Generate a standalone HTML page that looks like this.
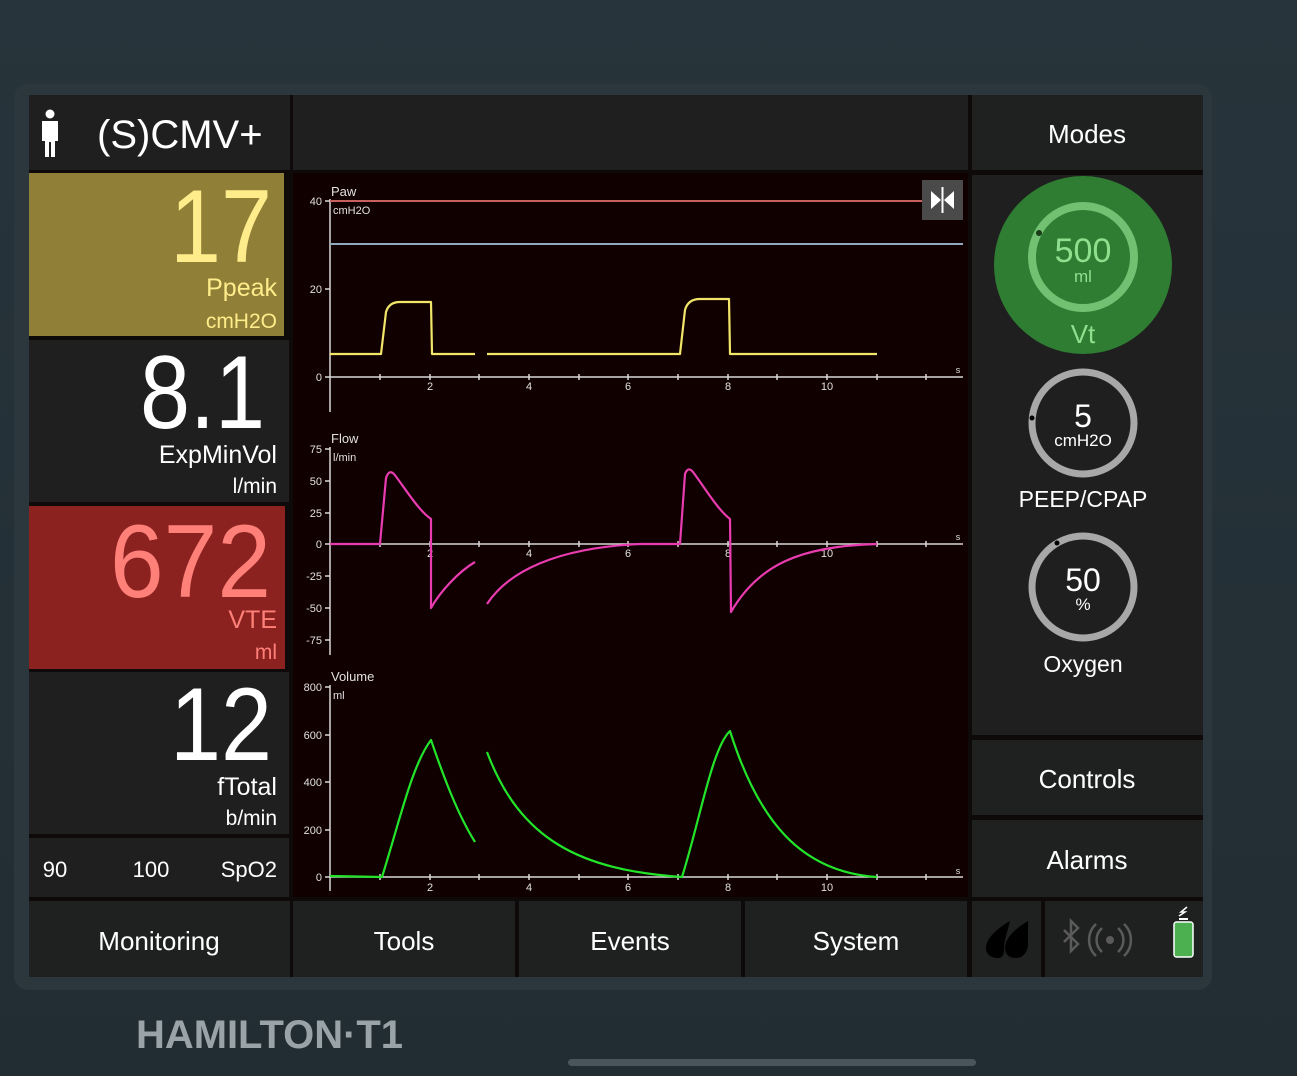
<!DOCTYPE html>
<html><head><meta charset="utf-8">
<style>
html,body{margin:0;padding:0;width:1297px;height:1076px;overflow:hidden;background:#263238;}
svg{display:block}
text{font-family:"Liberation Sans",sans-serif;}
.n{font-family:"Liberation Sans Narrow","Liberation Sans",sans-serif;}
</style></head><body>
<svg width="1297" height="1076" viewBox="0 0 1297 1076" xmlns="http://www.w3.org/2000/svg">
<defs>
<linearGradient id="bg" x1="0" y1="0" x2="0" y2="1">
<stop offset="0" stop-color="#27343b"/><stop offset="1" stop-color="#222d33"/></linearGradient>
</defs>
<rect width="1297" height="1076" fill="url(#bg)"/>
<rect x="14" y="84" width="1198" height="906" rx="14" fill="#2b363d"/>
<rect x="29" y="95" width="1174" height="882" fill="#0e0a0a"/>
<!-- header -->
<rect x="29" y="95" width="261" height="75" fill="#1f1f1f"/>
<rect x="293" y="95" width="675" height="75" fill="#1f1f1f"/>
<rect x="972" y="95" width="231" height="75" fill="#1f2120"/>
<g fill="#fff">
<circle cx="50" cy="114" r="4.5"/>
<path d="M42 121h16v20h-3v16h-4v-15h-2v15h-4v-16h-3z"/>
</g>
<text x="97" y="148" font-size="40" fill="#fff">(S)CMV+</text>
<text x="1087" y="143" font-size="26" fill="#fff" text-anchor="middle">Modes</text>
<!-- left tiles -->
<rect x="29" y="173" width="255" height="163" fill="#8f7f37"/>
<text class="n" x="170" y="262" font-size="104" fill="#ffec8a" textLength="102" lengthAdjust="spacingAndGlyphs">17</text>
<text x="277" y="296" font-size="25" fill="#ffec8a" text-anchor="end">Ppeak</text>
<text x="277" y="328" font-size="21" fill="#ffec8a" text-anchor="end">cmH2O</text>
<rect x="29" y="340" width="260" height="162" fill="#1f1f1f"/>
<text class="n" x="140" y="428" font-size="104" fill="#fff" textLength="125" lengthAdjust="spacingAndGlyphs">8.1</text>
<text x="277" y="463" font-size="25" fill="#fff" text-anchor="end">ExpMinVol</text>
<text x="277" y="493" font-size="21" fill="#fff" text-anchor="end">l/min</text>
<rect x="29" y="506" width="256" height="163" fill="#8b2220"/>
<text class="n" x="110" y="597" font-size="104" fill="#ff8078" textLength="161" lengthAdjust="spacingAndGlyphs">672</text>
<text x="277" y="628" font-size="25" fill="#ff8078" text-anchor="end">VTE</text>
<text x="277" y="659" font-size="21" fill="#ff8078" text-anchor="end">ml</text>
<rect x="29" y="672" width="260" height="162" fill="#1f1f1f"/>
<text class="n" x="170" y="760" font-size="104" fill="#fff" textLength="102" lengthAdjust="spacingAndGlyphs">12</text>
<text x="277" y="795" font-size="25" fill="#fff" text-anchor="end">fTotal</text>
<text x="277" y="825" font-size="21" fill="#fff" text-anchor="end">b/min</text>
<rect x="29" y="838" width="260" height="59" fill="#1f1f1f"/>
<text x="55" y="877" font-size="22" fill="#fff" text-anchor="middle">90</text>
<text x="151" y="877" font-size="22" fill="#fff" text-anchor="middle">100</text>
<text x="277" y="877" font-size="22" fill="#fff" text-anchor="end">SpO2</text>
<!-- graph area -->
<rect x="293" y="173" width="675" height="724" fill="#110000"/>
<g stroke="#d8d8d8" stroke-width="1.5" fill="none">
<path d="M330 199V412M325 201h5M325 289h5M325 377h5M330 377H963"/>
<path d="M330 447V655M325 449h5M325 481h5M325 513h5M325 544h5M325 576h5M325 608h5M325 640h5M330 544H963"/>
<path d="M330 685V891M325 687h5M325 735h5M325 782h5M325 830h5M325 877h5M330 877H963"/>
<path d="M380 374v6M430 374v6M479 374v6M529 374v6M579 374v6M628 374v6M678 374v6M728 374v6M777 374v6M827 374v6M877 374v6M926 374v6"/>
<path d="M380 541v6M430 541v6M479 541v6M529 541v6M579 541v6M628 541v6M678 541v6M728 541v6M777 541v6M827 541v6M877 541v6M926 541v6"/>
<path d="M380 874v6M430 874v6M479 874v6M529 874v6M579 874v6M628 874v6M678 874v6M728 874v6M777 874v6M827 874v6M877 874v6M926 874v6"/>
</g>
<g font-size="11" fill="#e0e0e0">
<text x="331" y="196" font-size="13">Paw</text><text x="333" y="214">cmH2O</text>
<text x="322" y="205" text-anchor="end">40</text><text x="322" y="293" text-anchor="end">20</text><text x="322" y="381" text-anchor="end">0</text>
<text x="331" y="443" font-size="13">Flow</text><text x="333" y="461">l/min</text>
<text x="322" y="453" text-anchor="end">75</text><text x="322" y="485" text-anchor="end">50</text><text x="322" y="517" text-anchor="end">25</text><text x="322" y="548" text-anchor="end">0</text><text x="322" y="580" text-anchor="end">-25</text><text x="322" y="612" text-anchor="end">-50</text><text x="322" y="644" text-anchor="end">-75</text>
<text x="331" y="681" font-size="13">Volume</text><text x="333" y="699">ml</text>
<text x="322" y="691" text-anchor="end">800</text><text x="322" y="739" text-anchor="end">600</text><text x="322" y="786" text-anchor="end">400</text><text x="322" y="834" text-anchor="end">200</text><text x="322" y="881" text-anchor="end">0</text>
<g text-anchor="middle">
<text x="430" y="390">2</text><text x="529" y="390">4</text><text x="628" y="390">6</text><text x="728" y="390">8</text><text x="827" y="390">10</text>
<text x="430" y="557">2</text><text x="529" y="557">4</text><text x="628" y="557">6</text><text x="728" y="557">8</text><text x="827" y="557">10</text>
<text x="430" y="891">2</text><text x="529" y="891">4</text><text x="628" y="891">6</text><text x="728" y="891">8</text><text x="827" y="891">10</text>
</g>
<text x="958" y="373" font-size="9" text-anchor="middle">s</text>
<text x="958" y="540" font-size="9" text-anchor="middle">s</text>
<text x="958" y="874" font-size="9" text-anchor="middle">s</text>
</g>
<path d="M330 201H922" stroke="#c86060" stroke-width="2"/>
<path d="M330 244H963" stroke="#8fa8bd" stroke-width="2"/>
<g fill="none" stroke-width="2.2" stroke-linejoin="round">
<path stroke="#f2e66a" d="M330 354L381 354L386 312Q389 302 400 302L431 302L432 354L475 354M487 354L680 354L685 310Q688 299 700 299L729 299L730 354L877 354"/>
<path stroke="#e83cb0" d="M330 544L380 544L386 478Q389 469 394 474C405 488 418 510 431 519L431 608C440 592 458 572 475 562M487 604C508 572 555 548 640 544L680 544L685 474Q688 466 693 472C705 488 718 510 730 519L731 612C758 565 800 546 877 544"/>
<path stroke="#22e52a" d="M330 876L382 877C400 820 412 765 431 740C444 778 458 815 475 842M487 752C520 840 580 870 682 877C700 820 712 748 730 731C758 820 800 872 877 877"/>
</g>
<rect x="922" y="180" width="41" height="40" fill="#4a4a4a"/>
<g fill="#fff"><path d="M931 191l10 9-10 9zM954 191l-10 9 10 9z"/><rect x="941.5" y="187" width="2" height="26"/></g>
<!-- right panel -->
<rect x="972" y="175" width="231" height="560" fill="#1f1f1f"/>
<circle cx="1083" cy="265" r="89" fill="#2e7d32"/>
<circle cx="1083" cy="257" r="51" fill="none" stroke="#72c072" stroke-width="8"/>
<circle cx="1039" cy="233" r="3" fill="#1a3a1a"/>
<text x="1083" y="262" font-size="34" fill="#8ee08e" text-anchor="middle">500</text>
<text x="1083" y="282" font-size="17" fill="#8ee08e" text-anchor="middle">ml</text>
<text x="1083" y="343" font-size="26" fill="#8ee08e" text-anchor="middle">Vt</text>
<circle cx="1083" cy="423" r="51" fill="none" stroke="#a8a8a8" stroke-width="7"/>
<circle cx="1032" cy="418" r="2.5" fill="#000"/>
<text x="1083" y="427" font-size="32" fill="#fff" text-anchor="middle">5</text>
<text x="1083" y="446" font-size="17" fill="#fff" text-anchor="middle">cmH2O</text>
<text x="1083" y="507" font-size="23" fill="#fff" text-anchor="middle">PEEP/CPAP</text>
<circle cx="1083" cy="587" r="51" fill="none" stroke="#a8a8a8" stroke-width="7"/>
<circle cx="1057" cy="543" r="2.5" fill="#000"/>
<text x="1083" y="591" font-size="32" fill="#fff" text-anchor="middle">50</text>
<text x="1083" y="610" font-size="17" fill="#fff" text-anchor="middle">%</text>
<text x="1083" y="672" font-size="23" fill="#fff" text-anchor="middle">Oxygen</text>
<rect x="972" y="740" width="231" height="75" fill="#1f2120"/>
<text x="1087" y="788" font-size="26" fill="#fff" text-anchor="middle">Controls</text>
<rect x="972" y="820" width="231" height="77" fill="#1f2120"/>
<text x="1087" y="869" font-size="26" fill="#fff" text-anchor="middle">Alarms</text>
<!-- bottom bar -->
<rect x="29" y="901" width="261" height="76" fill="#1f2120"/>
<rect x="293" y="901" width="222" height="76" fill="#1f2120"/>
<rect x="519" y="901" width="222" height="76" fill="#1f2120"/>
<rect x="745" y="901" width="222" height="76" fill="#1f2120"/>
<rect x="972" y="901" width="69" height="76" fill="#1f2120"/>
<rect x="1045" y="901" width="158" height="76" fill="#1f2120"/>
<g font-size="26" fill="#fff" text-anchor="middle">
<text x="159" y="950">Monitoring</text><text x="404" y="950">Tools</text><text x="630" y="950">Events</text><text x="856" y="950">System</text>
</g>
<g fill="#000">
<path d="M1010 921C998 928 986 938 986 948C986 955 992 958 998 958C1002 958 1004 955 1004 950C1004 940 1008 930 1010 921z"/>
<path d="M1028 921C1016 928 1005 938 1005 948C1005 955 1010 958 1016 958C1023 958 1028 952 1028 944z"/>
</g>
<g fill="none" stroke="#5a5a5a" stroke-width="2.5">
<path d="M1064 930l14 14-7 7v-30l7 7-14 14"/>
<path d="M1102 928a16 16 0 0 0 0 24M1096 924a22 22 0 0 0 0 32M1118 928a16 16 0 0 1 0 24M1124 924a22 22 0 0 1 0 32"/>
</g>
<circle cx="1110" cy="940" r="4" fill="#5a5a5a"/>
<rect x="1174" y="922" width="19" height="35" rx="2.5" fill="#4caf50" stroke="#fff" stroke-width="1.5"/>
<rect x="1179" y="918" width="9" height="2" fill="#fff"/>
<path d="M1187 907l-6 5h4l-6 4" fill="none" stroke="#fff" stroke-width="1.5"/>
<!-- logo -->
<text x="136" y="1048" font-size="40" font-weight="bold" fill="#9aa3a7" textLength="267" lengthAdjust="spacingAndGlyphs">HAMILTON·T1</text>
<rect x="568" y="1059" width="408" height="7" rx="3.5" fill="#4a555b"/>
</svg>
</body></html>
